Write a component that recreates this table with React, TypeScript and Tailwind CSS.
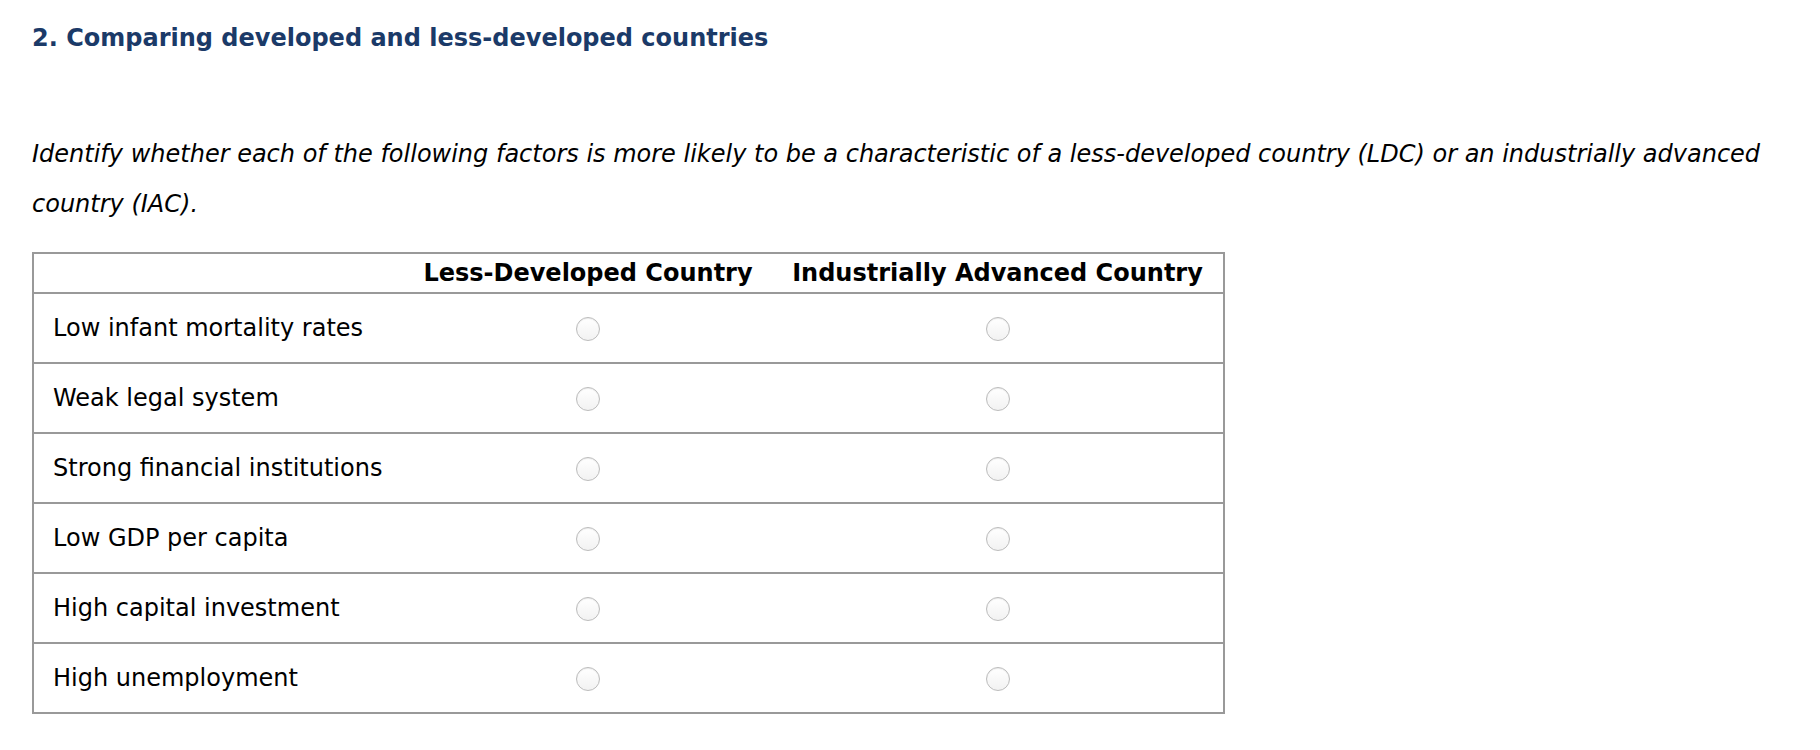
const rows = [
  "Low infant mortality rates",
  "Weak legal system",
  "Strong financial institutions",
  "Low GDP per capita",
  "High capital investment",
  "High unemployment",
];

function Radio() {
  return (
    <span className="inline-block w-[24px] h-[24px] rounded-full border border-[#bcbcbc] bg-gradient-to-b from-white to-[#f2f2f2] shadow-[inset_0_1px_1px_rgba(0,0,0,0.08)] align-middle" />
  );
}

export default function App() {
  return (
    <div className="min-h-screen bg-white text-black px-[32px] pt-[20px] font-['DejaVu_Sans','Liberation_Sans',sans-serif]">
      <h2 className="text-[24px] leading-[36px] font-bold text-[#1b3a68]">
        2. Comparing developed and less-developed countries
      </h2>
      <p className="mt-[73px] w-[1756px] text-[24px] leading-[50px] italic">
        Identify whether each of the following factors is more likely to be a characteristic of a
        less-developed country (LDC) or an industrially advanced country (IAC).
      </p>
      <table className="mt-[23px] border-collapse border-2 border-[#999] text-[24px]">
        <thead>
          <tr className="h-[40px]">
            <th className="w-[371px]" />
            <th className="w-[368px] font-bold text-center">Less-Developed Country</th>
            <th className="w-[452px] font-bold text-center">Industrially Advanced Country</th>
          </tr>
        </thead>
        <tbody>
          {rows.map((r) => (
            <tr key={r} className="h-[70px] border-t-2 border-[#999]">
              <td className="pl-[19px]">{r}</td>
              <td className="text-center">
                <Radio />
              </td>
              <td className="text-center">
                <Radio />
              </td>
            </tr>
          ))}
        </tbody>
      </table>
    </div>
  );
}
